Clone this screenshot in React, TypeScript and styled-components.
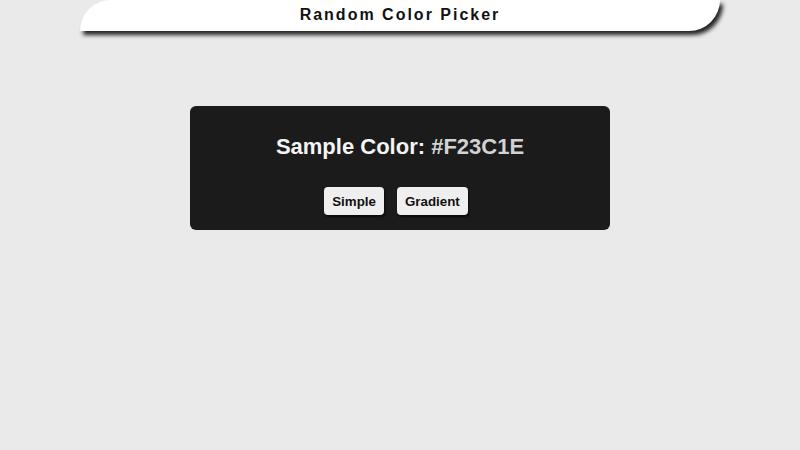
import React from "react";
import styled, { createGlobalStyle } from "styled-components";

const GlobalStyle = createGlobalStyle`
  html, body {
    margin: 0;
    padding: 0;
    background: #eaeaea;
    font-family: "Liberation Sans", Arial, sans-serif;
  }
`;

const Page = styled.div`
  display: flex;
  flex-direction: column;
  align-items: center;
  min-height: 450px;
`;

const Header = styled.header`
  width: 640px;
  height: 31px;
  box-sizing: border-box;
  padding-bottom: 2px;
  background: #ffffff;
  border-radius: 32px 0 32px 0;
  box-shadow: 3px 4px 4px rgba(0, 0, 0, 0.85);
  display: flex;
  align-items: center;
  justify-content: center;
`;

const Title = styled.h1`
  margin: 0;
  font-size: 16px;
  font-weight: 700;
  letter-spacing: 2px;
  color: #111;
  line-height: 28px;
`;

const Card = styled.section`
  margin-top: 75px;
  width: 420px;
  height: 124px;
  box-sizing: border-box;
  padding-top: 27px;
  background: #1b1b1b;
  border-radius: 6px;
  display: flex;
  flex-direction: column;
  align-items: center;
`;

const Heading = styled.h2`
  margin: 0;
  font-size: 22px;
  line-height: 28px;
  font-weight: 700;
  color: #f4f4f4;
`;

const Hex = styled.span`
  color: #d2d2d2;
`;

const Actions = styled.div`
  margin-top: 26px;
  padding-right: 8px;
  display: flex;
  gap: 13px;
`;

const Button = styled.button`
  height: 28px;
  padding: 0 8px;
  border: none;
  border-radius: 4px;
  background: #efefef;
  color: #111;
  font-family: "Liberation Sans", Arial, sans-serif;
  font-size: 13.33px;
  font-weight: 700;
  box-shadow: 1px 2px 2px rgba(0, 0, 0, 0.6);
  cursor: pointer;
`;

export default function App() {
  return (
    <>
      <GlobalStyle />
      <Page>
        <Header>
          <Title>Random Color Picker</Title>
        </Header>
        <Card>
          <Heading>
            Sample Color: <Hex>#F23C1E</Hex>
          </Heading>
          <Actions>
            <Button>Simple</Button>
            <Button>Gradient</Button>
          </Actions>
        </Card>
      </Page>
    </>
  );
}
